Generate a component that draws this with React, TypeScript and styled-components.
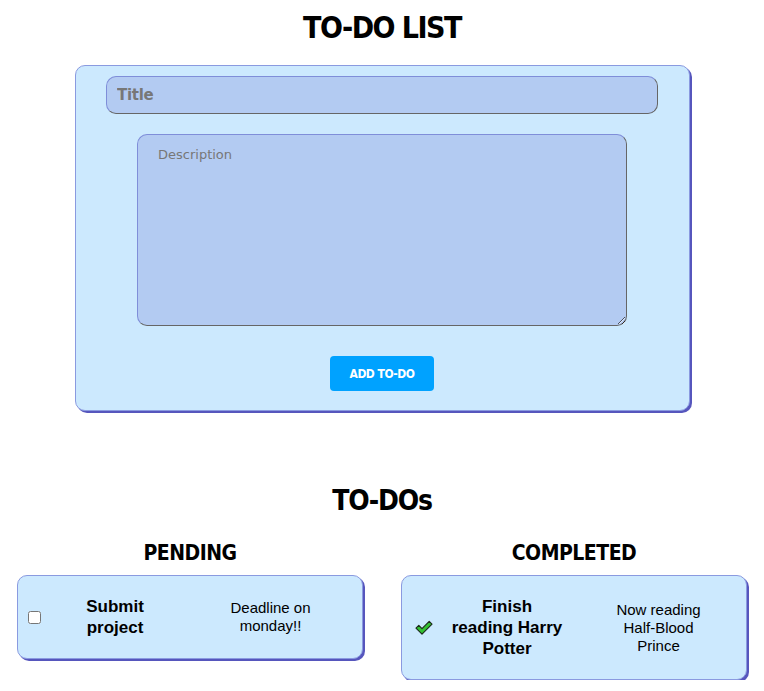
import styled, { createGlobalStyle } from "styled-components";

const GlobalStyle = createGlobalStyle`
  body {
    margin: 0;
    background: #ffffff;
    font-family: "Liberation Sans", Arial, sans-serif;
    color: #000;
  }
`;

type Todo = {
  title: string;
  description: string;
  done: boolean;
};

const pending: Todo[] = [
  { title: "Submit project", description: "Deadline on monday!!", done: false },
];

const completed: Todo[] = [
  {
    title: "Finish reading Harry Potter",
    description: "Now reading Half-Blood Prince",
    done: true,
  },
];

function CheckMark() {
  return (
    <CheckIcon width="18" height="16" viewBox="0 0 18 16">
      <path
        d="M1 8.2 L3.8 5.4 L7 8.6 L14.2 1.4 L17 4.2 L7 14.2 Z"
        fill="#33c233"
        stroke="#1c2b1c"
        strokeWidth="1.2"
        strokeLinejoin="round"
      />
    </CheckIcon>
  );
}

function TodoCard({ todo }: { todo: Todo }) {
  return (
    <Card>
      {todo.done ? <CheckMark /> : <Checkbox type="checkbox" />}
      <CardTitle>{todo.title}</CardTitle>
      <CardText>{todo.description}</CardText>
    </Card>
  );
}

export default function App() {
  return (
    <>
      <GlobalStyle />
      <Page>
        <MainTitle>TO-DO LIST</MainTitle>
        <FormCard>
          <TitleInput placeholder="Title" />
          <DescriptionInput placeholder="Description" />
          <AddButton>ADD TO-DO</AddButton>
        </FormCard>

        <ListTitle>TO-DOs</ListTitle>
        <Columns>
          <Column>
            <ColumnTitle>PENDING</ColumnTitle>
            {pending.map((t) => (
              <TodoCard key={t.title} todo={t} />
            ))}
          </Column>
          <Column>
            <ColumnTitle>COMPLETED</ColumnTitle>
            {completed.map((t) => (
              <TodoCard key={t.title} todo={t} />
            ))}
          </Column>
        </Columns>
      </Page>
    </>
  );
}

const headingFont = `"DejaVu Sans Condensed", "DejaVu Sans", sans-serif`;

const Page = styled.div`
  display: flex;
  flex-direction: column;
  align-items: center;
  padding: 10px 17px 0 17px;
`;

const MainTitle = styled.h1`
  font-family: ${headingFont};
  font-weight: 700;
  font-size: 30px;
  line-height: 36px;
  margin: 0 0 19px 0;
  letter-spacing: -1.5px;
`;

const FormCard = styled.div`
  width: 615px;
  height: 346px;
  box-sizing: border-box;
  background: #cce9fe;
  border: 1px solid #8a9ae0;
  border-radius: 10px;
  box-shadow: 2px 2px 0 0 #5656bd;
  display: flex;
  flex-direction: column;
  align-items: center;
  padding-top: 10px;
`;

const inputBase = `
  box-sizing: border-box;
  background: #b3cbf2;
  border-radius: 10px;
  border-style: solid;
  border-width: 1px;
  border-color: #7f8ed9 #666 #666 #7f8ed9;
  outline: none;
  color: #333;
`;

const TitleInput = styled.input`
  ${inputBase}
  width: 552px;
  height: 38px;
  padding: 0 10px;
  font-family: "DejaVu Sans", sans-serif;
  font-weight: 700;
  font-size: 15px;
  letter-spacing: -0.3px;
  &::placeholder {
    color: #777;
  }
`;

const DescriptionInput = styled.textarea`
  ${inputBase}
  width: 490px;
  height: 192px;
  margin-top: 20px;
  padding: 12px 20px;
  resize: vertical;
  font-family: "DejaVu Sans", sans-serif;
  font-size: 13px;
  &::placeholder {
    color: #777;
  }
`;

const AddButton = styled.button`
  margin-top: 30px;
  width: 104px;
  height: 35px;
  border: none;
  border-radius: 4px;
  background: #00a2ff;
  color: #fff;
  font-family: ${headingFont};
  font-weight: 700;
  font-size: 12px;
  letter-spacing: -0.5px;
  cursor: pointer;
`;

const ListTitle = styled.h2`
  font-family: ${headingFont};
  font-weight: 700;
  font-size: 28px;
  line-height: 36px;
  margin: 72px 0 22px 0;
  letter-spacing: -1.2px;
`;

const Columns = styled.div`
  align-self: stretch;
  display: grid;
  grid-template-columns: 346px 346px;
  justify-content: space-between;
`;

const Column = styled.div`
  display: flex;
  flex-direction: column;
  align-items: stretch;
`;

const ColumnTitle = styled.h3`
  font-family: ${headingFont};
  font-weight: 700;
  font-size: 21px;
  line-height: 24px;
  margin: 0 0 10px 0;
  text-align: center;
  letter-spacing: -0.5px;
`;

const Card = styled.div`
  box-sizing: border-box;
  background: #cce9fe;
  border: 1px solid #8a9ae0;
  border-radius: 10px;
  box-shadow: 2px 2px 0 0 #5656bd;
  display: flex;
  align-items: center;
  padding: 20px 10px 20px 6px;
  min-height: 84px;
`;

const Checkbox = styled.input`
  flex: none;
  width: 13px;
  height: 13px;
  margin: 0 0 0 4px;
`;

const CheckIcon = styled.svg`
  flex: none;
  margin-left: 7px;
`;

const CardTitle = styled.div`
  flex: 0 0 148px;
  box-sizing: border-box;
  font-weight: 700;
  font-size: 17px;
  line-height: 21px;
  text-align: center;
  padding: 0 16px;
`;

const CardText = styled.div`
  flex: 1 1 0;
  font-size: 15px;
  line-height: 18px;
  text-align: center;
  padding: 0 28px;
`;
